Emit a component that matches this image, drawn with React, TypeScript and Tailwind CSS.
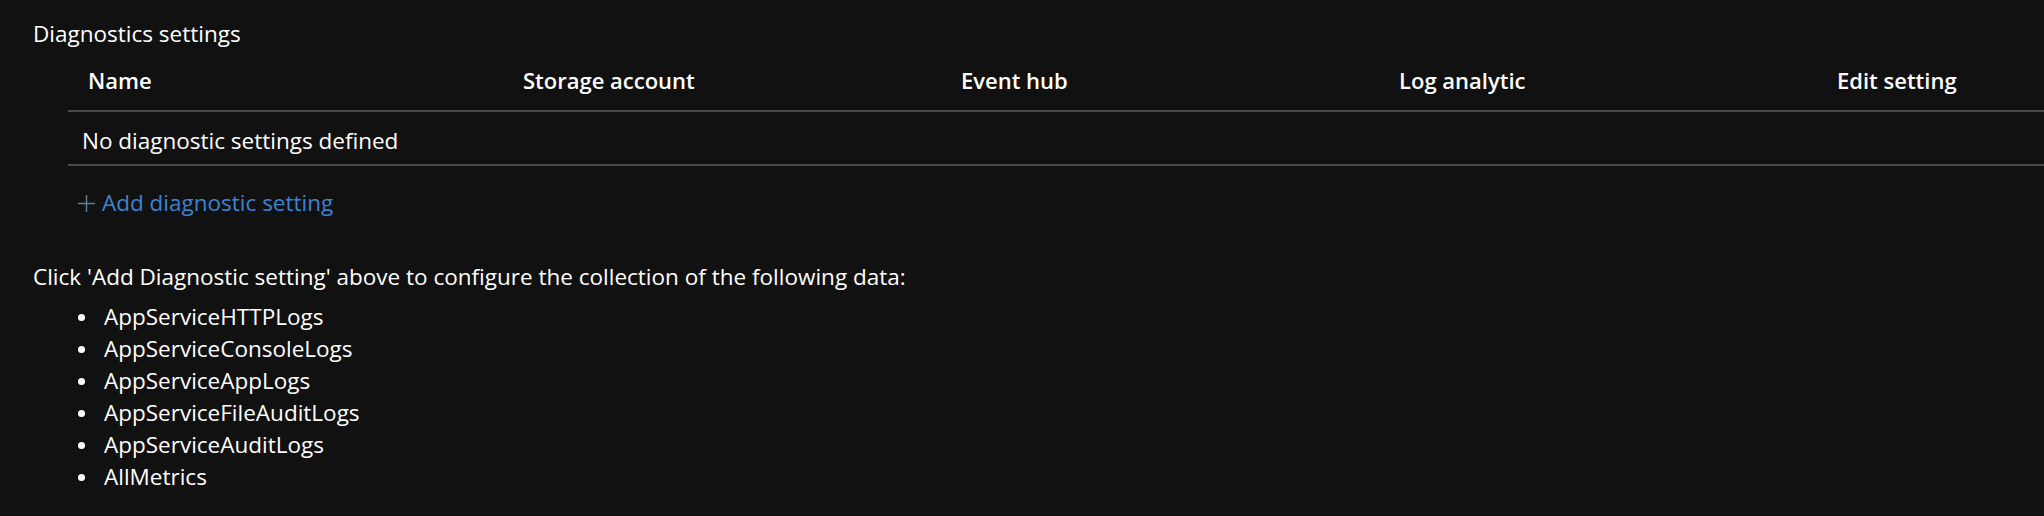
import React from 'react';

const columns = ['Name', 'Storage account', 'Event hub', 'Log analytic', 'Edit setting'];

const logs = [
  'AppServiceHTTPLogs',
  'AppServiceConsoleLogs',
  'AppServiceAppLogs',
  'AppServiceFileAuditLogs',
  'AppServiceAuditLogs',
  'AllMetrics',
];

export default function App() {
  return (
    <div
      className="min-h-screen w-full overflow-hidden bg-[#111111] text-white pl-[33px] pt-[19px] text-[22.5px]"
      style={{ fontFamily: '"Open Sans", "Noto Sans", sans-serif' }}
    >
      <h2 className="leading-[30px]">Diagnostics settings</h2>

      <div className="ml-[35px] mt-[3px] w-[2200px]">
        <div className="grid grid-cols-[438px_438px_438px_438px_1fr] border-b-2 border-[#4a4a4a] h-[60px] pb-[2px] items-center font-semibold text-[22px]">
          {columns.map((c, i) => (
            <div key={c} className={i === 0 ? 'pl-[20px]' : 'pl-[17px]'}>{c}</div>
          ))}
        </div>
        <div className="border-b-2 border-[#4a4a4a] h-[54px] pt-[5px] flex items-center pl-[14px]">
          No diagnostic settings defined
        </div>
      </div>

      <button className="ml-[45px] mt-[22px] flex items-center gap-[7px] text-[#3b83d4] leading-[30px]">
        <svg width="17" height="17" viewBox="0 0 17 17" className="text-[#5b7c94]">
          <path d="M8.5 0v17M0 8.5h17" stroke="currentColor" strokeWidth="1.5" />
        </svg>
        <span>Add diagnostic setting</span>
      </button>

      <p className="mt-[44px] leading-[30px]">
        Click 'Add Diagnostic setting' above to configure the collection of the following data:
      </p>

      <ul className="mt-[9px] pl-[45px]">
        {logs.map((l) => (
          <li key={l} className="flex items-center h-[32px] gap-[19px]">
            <span className="w-[7px] h-[7px] rounded-full bg-white shrink-0" />
            <span>{l}</span>
          </li>
        ))}
      </ul>
    </div>
  );
}
